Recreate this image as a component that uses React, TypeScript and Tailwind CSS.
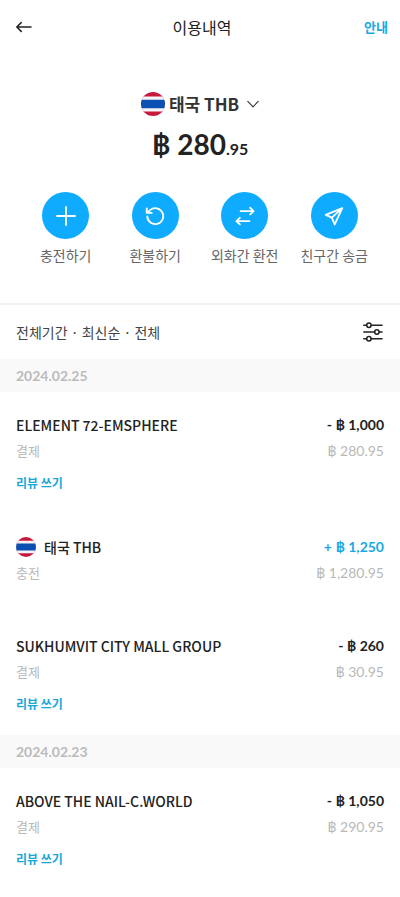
import React from "react";
import clsx from "clsx";

interface Transaction {
  id: number;
  title: string;
  type: string;
  amount: string;
  balance: string;
  income?: boolean;
  flag?: boolean;
  review?: boolean;
}

interface DayGroup {
  date: string;
  items: Transaction[];
}

const days: DayGroup[] = [
  {
    date: "2024.02.25",
    items: [
      { id: 1, title: "ELEMENT 72-EMSPHERE", type: "결제", amount: "- ฿ 1,000", balance: "฿ 280.95", review: true },
      { id: 2, title: "태국 THB", type: "충전", amount: "+ ฿ 1,250", balance: "฿ 1,280.95", income: true, flag: true },
      { id: 3, title: "SUKHUMVIT CITY MALL GROUP", type: "결제", amount: "- ฿ 260", balance: "฿ 30.95", review: true },
    ],
  },
  {
    date: "2024.02.23",
    items: [
      { id: 4, title: "ABOVE THE NAIL-C.WORLD", type: "결제", amount: "- ฿ 1,050", balance: "฿ 290.95", review: true },
    ],
  },
];

const actions = [
  { label: "충전하기", icon: <path d="M12 2.2v19.6M2.2 12h19.6" /> },
  {
    label: "환불하기",
    icon: <path d="M3.6 12.4A8.7 8.7 0 1 0 6.6 5.6L3.6 8.2M3 3.6v5h5.4" />,
  },
  {
    label: "외화간 환전",
    icon: <path d="M7.2 6.6h14M17.6 3l3.8 3.6-3.8 3.6M16.8 17.6H2.6M6.4 14l-3.8 3.6 3.8 3.6" />,
  },
  {
    label: "친구간 송금",
    icon: <path d="M21 3.4 3 10.8l6.6 3 3.2 7.4zM21 3.4 9.6 13.8" />,
  },
];

const ThaiFlag: React.FC<{ className?: string }> = ({ className }) => (
  <svg viewBox="0 0 24 24" className={clsx("shrink-0", className)} aria-hidden="true">
    <clipPath id="flag-circle">
      <circle cx="12" cy="12" r="12" />
    </clipPath>
    <g clipPath="url(#flag-circle)">
      <path fill="#c8193c" d="M0 0h24v24H0z" />
      <path fill="#f4f4f8" d="M0 4.6h24v14.8H0z" />
      <path fill="#0b50b0" d="M0 7.8h24v8.4H0z" />
    </g>
  </svg>
);

const TransactionRow: React.FC<{ item: Transaction }> = ({ item }) => (
  <li className={clsx("px-4 pt-5", item.review ? "pb-[21px]" : "pb-[27px]")}>
    <div className="flex items-center justify-between text-sm leading-[26px] font-bold text-[#222]">
      <h3 className="flex items-center gap-2 font-medium">
        {item.flag && <ThaiFlag className="size-5" />}
        {item.title}
      </h3>
      <span className={clsx("font-[Lato,'Noto_Sans_CJK_KR',sans-serif]", item.income && "text-[#18a8e2]")}>
        {item.amount}
      </span>
    </div>
    <div className="flex items-center justify-between leading-[26px] text-[#b8b8b8]">
      <span className="text-[13px] leading-[26px]">{item.type}</span>
      <span className="font-[Lato,'Noto_Sans_CJK_KR',sans-serif] text-sm leading-[26px]">{item.balance}</span>
    </div>
    {item.review && (
      <a href="#review" className="mt-2 block w-fit text-xs leading-[21px] font-bold text-[#18a8d8]">
        리뷰 쓰기
      </a>
    )}
  </li>
);

const App: React.FC = () => {
  return (
    <div className="min-h-screen bg-white font-['Noto_Sans_CJK_KR',sans-serif] text-[#222]">
      <header className="grid grid-cols-3 items-center pr-3 pl-4 leading-[54px]">
        <button type="button" aria-label="뒤로">
          <svg viewBox="0 0 16 16" className="size-4" fill="none" stroke="currentColor" strokeWidth="1.5" strokeLinecap="round" strokeLinejoin="round">
            <path d="M15 8H.8M5.2 3.6.8 8l4.4 4.4" />
          </svg>
        </button>
        <h1 className="text-center text-base leading-[54px]">이용내역</h1>
        <a href="#guide" className="text-right text-[13px] leading-[54px] font-bold text-[#18a8e2]">
          안내
        </a>
      </header>

      <main>
        {/* Balance */}
        <section className="flex flex-col items-center pt-9">
          <button type="button" className="flex items-center gap-1 text-[17px] leading-7 font-bold text-[#333]">
            <ThaiFlag className="size-6" />
            태국 THB
            <svg viewBox="0 0 12 12" className="ml-1 size-3" fill="none" stroke="currentColor" strokeWidth="1.1" strokeLinecap="round" strokeLinejoin="round">
              <path d="M.8 3.4 6 8.8l5.2-5.4" />
            </svg>
          </button>
          <p className="mt-1 font-[Lato,sans-serif] text-[28px] leading-[44px] font-bold">
            ฿ 280<span className="text-base">.95</span>
          </p>
        </section>

        {/* Quick actions */}
        <nav className="grid grid-cols-4 px-[21px] pt-[26px] pb-9">
          {actions.map((action) => (
            <button key={action.label} type="button" className="flex flex-col items-center gap-1 text-sm leading-6 text-[#666]">
              <span className="flex size-[47px] items-center justify-center rounded-full bg-[#0fabff]">
                <svg viewBox="0 0 24 24" className="size-[22px] text-white" fill="none" stroke="currentColor" strokeWidth="2" strokeLinecap="round" strokeLinejoin="round">
                  {action.icon}
                </svg>
              </span>
              {action.label}
            </button>
          ))}
        </nav>

        {/* Filter */}
        <div className="flex items-center justify-between border-t-2 border-[#f0f0f0] px-4 text-sm leading-[54px] text-[#444]">
          <span>전체기간 · 최신순 · 전체</span>
          <button type="button" aria-label="필터" className="text-[#222]">
            <svg viewBox="0 0 22 22" className="size-[22px]" fill="none" stroke="currentColor" strokeWidth="1.5" strokeLinecap="round">
              <path d="M1.8 4.2h2.7M9.3 4.2h10.7M1.8 11h10.7M17.3 11H20M1.8 17.8h2.7M9.3 17.8h10.7" />
              <circle cx="6.9" cy="4.2" r="2.2" />
              <circle cx="14.9" cy="11" r="2.2" />
              <circle cx="6.9" cy="17.8" r="2.2" />
            </svg>
          </button>
        </div>

        {/* Transactions grouped by day */}
        {days.map((day) => (
          <section key={day.date}>
            <h2 className="bg-[#f9f9f9] px-4 font-[Lato,sans-serif] text-sm leading-[33px] font-bold text-[#bbb]">
              {day.date}
            </h2>
            <ul>
              {day.items.map((item) => (
                <TransactionRow key={item.id} item={item} />
              ))}
            </ul>
          </section>
        ))}
      </main>
    </div>
  );
};

export default App;
